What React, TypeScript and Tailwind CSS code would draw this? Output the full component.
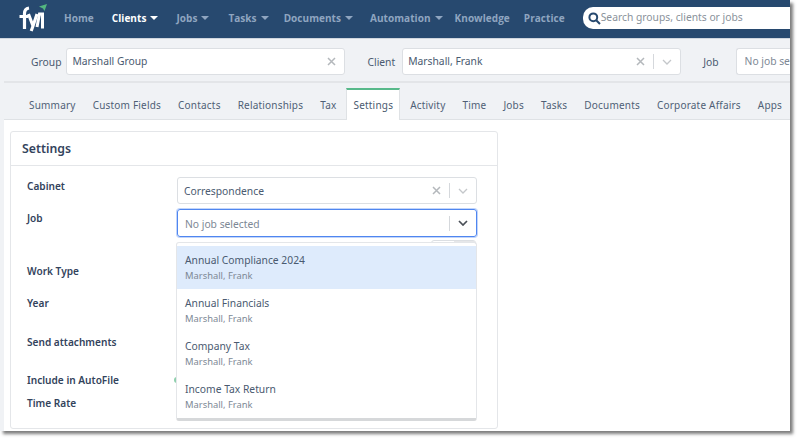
import React from "react";

const Caret = () => (
  <span className="ml-[4px] inline-block h-0 w-0 border-x-[4px] border-t-[4px] border-x-transparent border-t-current" />
);

const Cross = ({ color = "#b4b8bc" }: { color?: string }) => (
  <svg width="9" height="9" viewBox="0 0 9 9" fill="none" stroke={color} strokeWidth="1.5"><path d="M1 1l7 7M8 1L1 8" /></svg>
);

const Chevron = ({ color = "#c4c7ca", w = 1.3 }: { color?: string; w?: number }) => (
  <svg width="10" height="6" viewBox="0 0 10 6" fill="none" stroke={color} strokeWidth={w}><path d="M1 1l4 4 4-4" /></svg>
);

const NavItem = ({ label, caret, active, cls }: { label: string; caret?: boolean; active?: boolean; cls: string }) => (
  <span className={`flex items-center font-bold text-[10px] tracking-[0.05px] whitespace-nowrap ${active ? "text-white" : "text-[#8fa5c0]"} ${cls}`}>
    {label}
    {caret && <Caret />}
  </span>
);

const Tab = ({ label, active }: { label: string; active?: boolean }) => (
  <span
    className={
      active
        ? "-mx-[7px] -mb-px z-10 flex h-[32px] items-center whitespace-nowrap border-x border-t-2 border-x-[#dfe2e5] border-t-[#58b98a] bg-white px-[6px] text-[#4a5a70]"
        : "flex h-[28px] items-center whitespace-nowrap text-[#4f5f75]"
    }
  >
    {label}
  </span>
);

const Field = ({ label, h }: { label: string; h: string }) => (
  <div className={`text-[10.1px] font-semibold leading-[17px] text-[#33435c] ${h}`}>{label}</div>
);

const Option = ({ title, h }: { title: string; h: string }) => (
  <div className={`px-[8px] pt-[6px] ${h}`}>
    <div className="text-[10.3px] leading-[16px] text-[#4a5a70]">{title}</div>
    <div className="pt-[1px] text-[9.4px] leading-[14px] text-[#7d8895]">Marshall, Frank</div>
  </div>
);

export default function App() {
  return (
    <div className="h-[444px] w-[802px] overflow-hidden bg-white font-['Noto_Sans','Open_Sans',sans-serif]">
      <div className="flex h-[431px] w-[790px] flex-col overflow-hidden bg-[#f0f2f5] shadow-[3px_3px_3px_rgba(70,70,70,0.7)]">
        {/* Top navigation */}
        <header className="flex h-[39px] shrink-0 items-center border-b border-[#cfd6de] bg-[#27496f] pb-[2px] font-['Open_Sans','Noto_Sans',sans-serif]">
          <svg width="30" height="30" viewBox="0 0 30 30" className="ml-[18px] shrink-0" fill="none">
            <path d="M6.5 26V10.5C6.5 7.5 8 5.5 11 5" stroke="#fff" strokeWidth="3.2" />
            <path d="M1.5 13.5H10" stroke="#fff" strokeWidth="3" />
            <path d="M10.5 11l4.5 12-1.8 5M19 11l-4 12" stroke="#fff" strokeWidth="3.1" />
            <path d="M19 24l2.5-13 3 0v14.5" stroke="#fff" strokeWidth="3" />
            <path d="M21 3.5L29 1l-2.5 7-1.5-2.6z" fill="#53b67f" />
          </svg>
          <NavItem label="Home" cls="ml-[16px] mt-[1px]" />
          <NavItem label="Clients" caret active cls="ml-[18px]" />
          <NavItem label="Jobs" caret cls="ml-[18px]" />
          <NavItem label="Tasks" caret cls="ml-[19px]" />
          <NavItem label="Documents" caret cls="ml-[15px]" />
          <NavItem label="Automation" caret cls="ml-[17px]" />
          <NavItem label="Knowledge" cls="ml-[12px] mt-[1px]" />
          <NavItem label="Practice" cls="ml-[14px] mt-[1px]" />
          <div className="ml-[18px] flex h-[22px] flex-1 items-center rounded-l-[10px] bg-white pl-[5px]">
            <svg width="13" height="13" viewBox="0 0 13 13" fill="none" stroke="#27496f" strokeWidth="2"><circle cx="5.3" cy="5.3" r="3.9" /><path d="M8.2 8.2l3.8 3.8" /></svg>
            <span className="whitespace-nowrap font-['Noto_Sans',sans-serif] text-[10.3px] text-[#8a929b]">Search groups, clients or jobs</span>
          </div>
        </header>

        {/* Context filters */}
        <div className="ml-[4px] flex h-[44px] shrink-0 items-start overflow-hidden border-b-2 border-[#e3e5e8] pt-[9px] text-[10.3px] text-[#4a5a70]">
          <span className="ml-[27px] mr-[5px] pt-[1px] leading-[27px]">Group</span>
          <div className="flex h-[27px] w-[279px] shrink-0 items-center justify-between rounded-[3px] border border-[#dcdfe3] bg-white pl-[5px] pr-[8px]">
            <span className="pt-[1px]">Marshall Group</span>
            <Cross />
          </div>
          <span className="ml-[22px] mr-[7px] pt-[1px] leading-[27px]">Client</span>
          <div className="flex h-[27px] w-[279px] shrink-0 items-center justify-between rounded-[3px] border border-[#dcdfe3] bg-white pl-[5px]">
            <span className="pt-[1px]">Marshall, Frank</span>
            <div className="flex items-center">
              <Cross />
              <span className="mx-[8px] h-[15px] w-px bg-[#d5d8dc]" />
              <span className="mr-[8px] flex"><Chevron /></span>
            </div>
          </div>
          <span className="ml-[22px] mr-[17px] pt-[1px] leading-[27px]">Job</span>
          <div className="flex h-[27px] w-[60px] shrink-0 items-center overflow-hidden rounded-l-[3px] border border-r-0 border-[#dcdfe3] bg-white pl-[8px] text-[#7d8895]">
            <span className="whitespace-nowrap pt-[1px]">No job se</span>
          </div>
        </div>

        {/* Tabs */}
        <nav className="ml-[4px] flex h-[37px] shrink-0 items-end gap-[17px] border-b border-[#dfe2e5] pl-[25px] text-[10px] tracking-[0.2px]">
          <Tab label="Summary" />
          <Tab label="Custom Fields" />
          <Tab label="Contacts" />
          <Tab label="Relationships" />
          <Tab label="Tax" />
          <Tab label="Settings" active />
          <Tab label="Activity" />
          <Tab label="Time" />
          <Tab label="Jobs" />
          <Tab label="Tasks" />
          <Tab label="Documents" />
          <Tab label="Corporate Affairs" />
          <Tab label="Apps" />
        </nav>

        {/* Content */}
        <main className="ml-[4px] min-h-0 flex-1 bg-white pl-[6px] pt-[11px]">
          <section className="relative h-[298px] w-[488px] rounded-[3px] border border-[#e4e6e9] bg-white">
            <h2 className="flex h-[34px] items-center border-b border-[#e4e6e9] pl-[11px] pt-[2px] text-[12.3px] font-semibold text-[#33435c]">Settings</h2>
            <div className="flex pl-[16px] pr-[20px]">
              <div className="w-[150px] shrink-0 pt-[12px]">
                <Field label="Cabinet" h="h-[32px]" />
                <Field label="Job" h="h-[53px]" />
                <Field label="Work Type" h="h-[32px]" />
                <Field label="Year" h="h-[39px]" />
                <Field label="Send attachments" h="h-[38px]" />
                <Field label="Include in AutoFile" h="h-[23px]" />
                <Field label="Time Rate" h="h-[20px]" />
              </div>
              <div className="flex-1 pt-[11px]">
                <div className="flex h-[27px] items-center justify-between rounded-[3px] border border-[#dcdfe3] pl-[6px] text-[10.3px] text-[#4a5a70]">
                  <span className="pt-[2px]">Correspondence</span>
                  <div className="flex items-center">
                    <Cross />
                    <span className="mx-[8px] h-[15px] w-px bg-[#d5d8dc]" />
                    <span className="mr-[8px] flex"><Chevron /></span>
                  </div>
                </div>
                <div className="mt-[5px] flex h-[28px] items-center justify-between rounded-[3px] border border-[#4f86f0] pl-[7px] text-[10.3px] text-[#7d8895] shadow-[0_0_0_1px_rgba(79,134,240,0.35)]">
                  <span className="pt-[3px]">No job selected</span>
                  <div className="flex items-center">
                    <span className="mr-[8px] h-[15px] w-px bg-[#d5d8dc]" />
                    <span className="mr-[8px] flex"><Chevron color="#4a4f57" w={1.7} /></span>
                  </div>
                </div>
              </div>
            </div>
            {/* Control partly hidden behind the dropdown */}
            <div className="absolute left-[420px] top-[108px] h-[8px] w-[45px] rounded-t-[3px] border border-[#dcdfe3] bg-white">
              <div className="ml-auto h-full w-[21px] bg-[#e6e7e9]" />
            </div>
            <div className="absolute left-[163px] top-[245px] h-[6px] w-[3px] rounded-l-[3px] bg-[#8fd0ae]" />
            {/* Open dropdown */}
            <div className="absolute left-[165px] top-[110px] h-[179px] w-[301px] overflow-hidden rounded-[3px] border border-[#e4e6e9] border-b-[3px] border-b-[#d6d8da] bg-white pt-[3px]">
              <div className="bg-[#deebfc]"><Option title="Annual Compliance 2024" h="h-[43px]" /></div>
              <Option title="Annual Financials" h="h-[43px]" />
              <Option title="Company Tax" h="h-[43px]" />
              <Option title="Income Tax Return" h="h-[43px]" />
            </div>
          </section>
        </main>
      </div>
    </div>
  );
}
